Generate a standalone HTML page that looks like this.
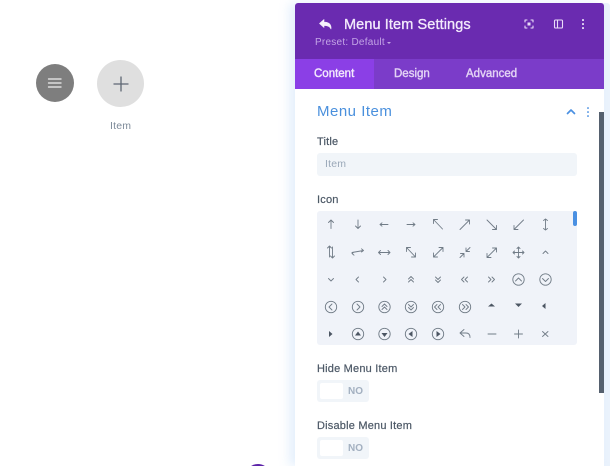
<!DOCTYPE html>
<html>
<head>
<meta charset="utf-8">
<style>
html,body{margin:0;padding:0;width:610px;height:466px;overflow:hidden;background:#fff;font-family:"Liberation Sans",sans-serif}
#w{position:relative;width:610px;height:466px;overflow:hidden;background:#fff;filter:blur(.3px)}
.a{position:absolute;white-space:nowrap}
.lab{font-size:11px;color:#4c5866;font-weight:400;letter-spacing:.2px;line-height:14px;-webkit-text-stroke:.2px #4c5866}
.tog{position:absolute;left:317px;width:52px;height:22px;background:#f1f5f9;border-radius:3px}
.tog i{position:absolute;left:3px;top:3px;width:23px;height:16px;background:#fff;border-radius:2px}
.tog b{position:absolute;left:31px;top:4px;font-size:10px;line-height:14px;color:#a3b0c0;font-weight:700}
.tab{font-size:11.500px;line-height:15px;font-weight:400;-webkit-text-stroke:.4px currentColor}
</style>
</head>
<body>
<div id="w">
<div class="a" style="left:36px;top:64px;width:38px;height:38px;border-radius:50%;background:#7e7e7e"></div>
<div class="a" style="left:97px;top:60px;width:47px;height:47px;border-radius:50%;background:#dfdfdf"></div>
<div class="a" style="left:110px;top:120px;font-size:10.500px;line-height:13px;color:#7d8a99;letter-spacing:.2px">Item</div>

<div class="a" style="left:295px;top:3px;width:309px;height:463px;background:#fff;box-shadow:-6px 0 10px 0 rgba(170,205,245,.3),6px 0 0 0 rgba(170,205,245,.25);border-radius:3px 3px 0 0"></div>
<div class="a" style="left:295px;top:3px;width:309px;height:56px;background:#6a2bb0;border-radius:3px 3px 0 0"></div>
<div class="a" style="left:295px;top:59px;width:309px;height:30px;background:#7b3cc9"></div>
<div class="a" style="left:295px;top:59px;width:79px;height:30px;background:#8b3fe6"></div>

<div class="a" style="left:344px;top:16px;font-size:14.500px;line-height:18px;font-weight:400;color:#f3eafc;letter-spacing:.1px;-webkit-text-stroke:.35px #f3eafc">Menu Item Settings</div>
<div class="a" style="left:315px;top:36px;font-size:10px;line-height:13px;color:#c3a5e6;letter-spacing:.25px">Preset: Default</div>
<div class="a" style="left:387px;top:42px;width:0;height:0;border-left:2px solid transparent;border-right:2px solid transparent;border-top:2.500px solid #c3a5e6"></div>

<div class="a tab" style="left:314px;top:67px;color:#f3eafc">Content</div>
<div class="a tab" style="left:394px;top:67px;color:#e3d3f5">Design</div>
<div class="a tab" style="left:466px;top:67px;color:#e3d3f5">Advanced</div>

<div class="a" style="left:317px;top:102px;font-size:15px;line-height:19px;color:#4a90dd;letter-spacing:.5px">Menu Item</div>

<div class="a lab" style="left:317px;top:135px">Title</div>
<div class="a" style="left:317px;top:153px;width:260px;height:23px;background:#f1f5f9;border-radius:3px"></div>
<div class="a" style="left:325px;top:158px;font-size:10.500px;line-height:13px;color:#9aa8b8;letter-spacing:.2px">Item</div>

<div class="a lab" style="left:317px;top:193px">Icon</div>
<div class="a" style="left:317px;top:211px;width:260px;height:134px;background:#f0f3f9;border-radius:3px"></div>
<div class="a" style="left:573px;top:211px;width:4px;height:15px;background:#4a90e2;border-radius:2px"></div>

<div class="a" style="left:599px;top:112px;width:5px;height:281px;background:#55606e"></div>

<div class="a lab" style="left:317px;top:362px">Hide Menu Item</div>
<div class="tog" style="top:380px"><i></i><b style="top:5px">NO</b></div>
<div class="a lab" style="left:317px;top:419px">Disable Menu Item</div>
<div class="tog" style="top:437px"><i></i><b style="top:5px">NO</b></div>

<svg class="a" style="left:0;top:0;display:block" width="610" height="466" viewBox="0 0 610 466" fill="none" stroke-linecap="round" stroke-linejoin="round">
<path d="M251.100 466A13 13 0 0 1 264.900 466Z" fill="#5c23a8"/>
<!-- preview icons -->
<path d="M48.500 79H61M48.500 83H61M48.500 87H61" stroke="#f0f0f0" stroke-width="1.300"/>
<path d="M114 84H128M121 77V91" stroke="#5d6673" stroke-width="1.300"/>
<!-- header icons -->
<path d="M319.500 23.500L324 19.500V22C329 22 331.500 24.500 331 29C330 26.500 328 25.500 324 25.500V27.500Z" fill="#f5f0fb" stroke="#f5f0fb" stroke-width=".6"/>
<g stroke="#eadcf8" stroke-width="1.100">
<path d="M525 22V20H527M531 20H533V22M533 26V28H531M527 28H525V26"/>
<rect x="554.500" y="20" width="8" height="8" rx="1"/>
<path d="M557.500 20V28"/>
</g>
<rect x="527.500" y="22.500" width="3" height="3" fill="#eadcf8"/>
<path d="M583 20V20.100M583 24V24.100M583 28V28.100" stroke="#f0e8fa" stroke-width="2"/>
<!-- section controls -->
<path d="M567.500 113.500L571 110L574.500 113.500" stroke="#4a90e2" stroke-width="1.700"/>
<path d="M588 108V108.100M588 112V112.100M588 116V116.100" stroke="#4a90e2" stroke-width="1.800"/>
<!-- icon grid -->
<g stroke="#717c87" stroke-width=".9">
<!-- row 1 -->
<path d="M331 228.500V220M328.500 222.500L331 220L333.500 222.500"/>
<path d="M358 220V228.500M355.500 226L358 228.500L360.500 226"/>
<path d="M380 224.500H388M382 222.800L380 224.500L382 226.200"/>
<path d="M407 224.500H415M413 222.800L415 224.500L413 226.200"/>
<path d="M442.500 229L433.500 219.500M433.500 223.500V219.500H437.500"/>
<path d="M460 229.500L469.500 220M465.500 220H469.500V224"/>
<path d="M487 220L496.500 229.500M496.500 225.500V229.500H492.500"/>
<path d="M523.500 220L514 229.500M514 225.500V229.500H518"/>
<path d="M545.500 219V230M543.500 220.500L545.500 219L547.500 220.500M543.500 228.500L545.500 230L547.500 228.500"/>
<!-- row 2 -->
<path d="M329.500 257V246M327.500 248L329.500 246L331.500 248M332.500 247V258M330.500 256L332.500 258L334.500 256"/>
<path d="M352 252.500L363.500 250.500M361.500 248.800L363.500 250.500L361.500 252M352 253.500L354 255.200M352 253.500L354 252"/>
<path d="M378.500 252.500H390M380.500 250.500L378.500 252.500L380.500 254.500M388 250.500L390 252.500L388 254.500"/>
<path d="M406.500 247.500L415.500 257M406.500 251.500V247.500H410.500M415.500 253V257H411.500"/>
<path d="M433.500 257L443 247.500M439 247.500H443V251.500M433.500 253V257H437.500"/>
<path d="M460 257.500L464 253.500M460.500 253.500H464V257M470 247.500L466 251.500M466 248V251.500H469.500"/>
<path d="M487 257.500L496.500 248M492.500 248H496.500V252M487 253.500V257.500H491"/>
<path d="M518.500 247V258M513 252.500H524M517 248.500L518.500 247L520 248.500M517 256.500L518.500 258L520 256.500M514.500 251L513 252.500L514.500 254M522.500 251L524 252.500L522.500 254"/>
<path d="M543 253.500L545.500 251L548 253.500"/>
<!-- row 3 -->
<path d="M328.500 278.500L331 281L333.500 278.500"/>
<path d="M358.500 277L356 279.500L358.500 282"/>
<path d="M383.500 277L386 279.500L383.500 282"/>
<path d="M408.500 279L411 276.500L413.500 279M408.500 282L411 279.500L413.500 282"/>
<path d="M435.500 277L438 279.500L440.500 277M435.500 280L438 282.500L440.500 280"/>
<path d="M464 277L461.500 279.500L464 282M467.500 277L465 279.500L467.500 282"/>
<path d="M488.500 277L491 279.500L488.500 282M492 277L494.500 279.500L492 282"/>
<circle cx="518.500" cy="279.500" r="5.700"/><path d="M515.500 281L518.500 278L521.500 281"/>
<circle cx="545.500" cy="279.500" r="5.700"/><path d="M542.500 278.500L545.500 281.500L548.500 278.500"/>
<!-- row 4 -->
<circle cx="331" cy="307" r="5.700"/><path d="M332 304L329 307L332 310"/>
<circle cx="358" cy="307" r="5.700"/><path d="M357 304L360 307L357 310"/>
<circle cx="384.500" cy="307" r="5.700"/><path d="M382 306.500L384.500 304L387 306.500M382 309.500L384.500 307L387 309.500"/>
<circle cx="411" cy="307" r="5.700"/><path d="M408.500 304.500L411 307L413.500 304.500M408.500 307.500L411 310L413.500 307.500"/>
<circle cx="438" cy="307" r="5.700"/><path d="M437 304.500L434.500 307L437 309.500M440.500 304.500L438 307L440.500 309.500"/>
<circle cx="465" cy="307" r="5.700"/><path d="M462.500 304.500L465 307L462.500 309.500M466 304.500L468.500 307L466 309.500"/>
<!-- row 5 -->
<circle cx="358" cy="334" r="5.700"/>
<circle cx="384.500" cy="334" r="5.700"/>
<circle cx="411" cy="334" r="5.700"/>
<circle cx="438" cy="334" r="5.700"/>
<path d="M464 329.500L460 333L464 336.500M460 333H466C468.500 333 470 334.500 470 337.500"/>
<path d="M488 334H496"/>
<path d="M514.500 334H522.500M518.500 330V338"/>
<path d="M542.500 331.500L548 336.500M548 331.500L542.500 336.500"/>
</g>
<g fill="#4c5663">
<path d="M488 306.500L491.500 303.500L495 306.500Z"/>
<path d="M515 303.500L518.500 307L522 303.500Z"/>
<path d="M545.500 303L542 306L545.500 309Z"/>
<path d="M329 331L332.500 334L329 337Z"/>
<path d="M358 331.500L355 335.500H361Z"/>
<path d="M381.500 333L384.500 337L387.500 333Z"/>
<path d="M412.500 331L408.500 334L412.500 337Z"/>
<path d="M436.500 331L440.500 334L436.500 337Z"/>
</g>
</svg>
</div>
</body>
</html>
